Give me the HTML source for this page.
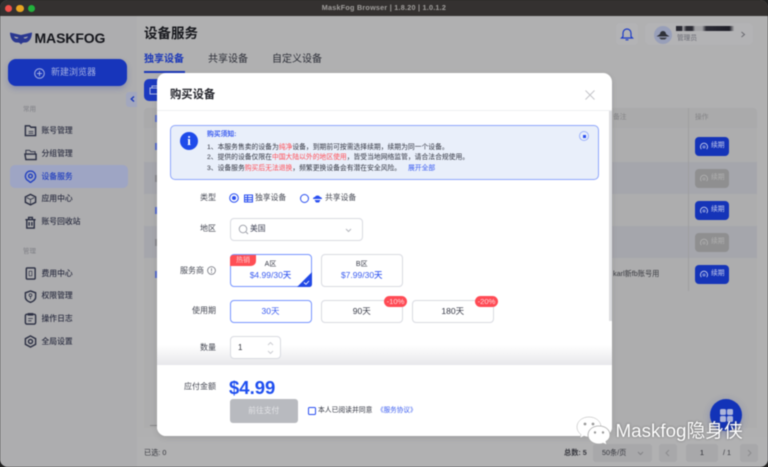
<!DOCTYPE html>
<html lang="zh">
<head>
<meta charset="utf-8">
<style>
html,body{margin:0;padding:0;width:768px;height:467px;overflow:hidden;background:#222}
*{box-sizing:border-box}
body{font-family:"Liberation Sans","Noto Sans CJK SC",sans-serif}
#win{position:absolute;left:0;top:0;width:768px;height:467px;border-radius:8px;overflow:hidden;background:#b0b0b1;filter:blur(.45px)}
.a{position:absolute;white-space:nowrap}
.nav{left:41.500px;font-size:7.800px;line-height:12px;color:#2c2f42;font-weight:500}
.grp{left:23px;font-size:6.500px;line-height:10px;color:#7d7e84}
.ic{position:absolute;left:23.500px;width:13px;height:13px;fill:none;stroke:#2a2e42;stroke-width:1.500}
.lbl{right:552px;font-size:8px;line-height:12px;color:#444752;text-align:right}
.card{position:absolute;background:#fff;border:1px solid #d9dbe1;border-radius:4px;text-align:center}
.sel{border-color:#7795ff}
.badge{position:absolute;background:#ff4b55;color:#ffd9dc;font-size:7.600px;line-height:11px;height:11px;border-radius:6px;text-align:center}
.n{font-size:6.800px;line-height:10px;color:#30333f}
.r{color:#ff4d55}
.ren{position:absolute;left:695px;width:34px;height:18.500px;border-radius:4px;color:#c6cdee;font-size:6.800px;line-height:18px;padding-left:16px;background:#1534b8}
.ren svg{position:absolute;left:5px;top:5px;width:8px;height:8px;fill:none;stroke:#c6cdee;stroke-width:1}
.off{background:#8f8f90;color:#b0b0b0}
.off svg{stroke:#b0b0b0}
</style>
</head>
<body>
<div id="win">
<!-- title bar -->
<div class="a" style="left:0;top:0;width:768px;height:16px;background:#343130"></div>
<div class="a" style="left:4.500px;top:4.500px;width:7.500px;height:7.500px;border-radius:50%;background:#f0504a"></div>
<div class="a" style="left:16px;top:4.500px;width:7.500px;height:7.500px;border-radius:50%;background:#e9a522"></div>
<div class="a" style="left:27.500px;top:4.500px;width:7.500px;height:7.500px;border-radius:50%;background:#22b23c"></div>
<div class="a" style="left:0;width:768px;top:2.500px;text-align:center;font-size:7.200px;line-height:9px;color:#a09e9c;font-weight:bold;letter-spacing:.25px">MaskFog Browser | 1.8.20 | 1.0.1.2</div>

<!-- sidebar -->
<div class="a" style="left:0;top:16px;width:137px;height:451px;background:#adadaf"></div>
<svg class="a" style="left:10px;top:31px;width:22px;height:14px" viewBox="0 0 22 14"><path d="M0 1.500C4 2.500 7 3 11 4C15 3 18 2.500 22 1.500C22 7 19 12 14.500 11.500C13 11.300 12 12 11 13.500C10 12 9 11.300 7.500 11.500C3 12 0 7 0 1.500Z" fill="#2a3790"/><path d="M4 5.500L8.500 6.500C8 8 5 8 4 5.500ZM18 5.500L13.500 6.500C14 8 17 8 18 5.500Z" fill="#adadaf"/></svg>
<div class="a" style="left:34.500px;top:29px;font-size:14px;line-height:18px;font-weight:bold;color:#15161c;letter-spacing:-.1px">MASKFOG</div>
<div class="a" style="left:8px;top:59px;width:119px;height:27px;border-radius:8px;background:#1735bb;box-shadow:0 3px 6px rgba(40,60,170,.25)"></div>
<svg class="a" style="left:34px;top:67.500px;width:11px;height:11px" viewBox="0 0 11 11" fill="none" stroke="#a2aee2" stroke-width="1"><circle cx="5.500" cy="5.500" r="4.800"/><path d="M5.500 3V8M3 5.500H8"/></svg>
<div class="a" style="left:51px;top:66px;font-size:9px;line-height:13px;color:#a2aee2">新建浏览器</div>
<div class="a" style="left:126px;top:92px;width:11px;height:15px;background:#a2a7be;border-radius:3px 0 0 3px"></div>
<svg class="a" style="left:129.500px;top:96px;width:5px;height:6px" viewBox="0 0 5 6"><path d="M4 .5L1.200 3L4 5.500" fill="none" stroke="#1735bb" stroke-width="1.300"/></svg>

<div class="a grp" style="top:104.500px">常用</div>
<div class="a" style="left:9.500px;top:165px;width:118.500px;height:22.500px;border-radius:5px;background:#9ea5c4"></div>

<svg class="ic" style="top:124px" viewBox="0 0 14 14"><path d="M1.500 2H6L7.500 3.500H12.500V12.500H1.500Z"/><path d="M5 8H10M5 10H10" stroke-width=".8"/></svg>
<div class="a nav" style="top:124.500px">账号管理</div>
<svg class="ic" style="top:147.500px" viewBox="0 0 14 14"><path d="M2 6V2.500H6L7.500 4H12V6" stroke-width="1"/><path d="M1 6.500H13V12.500H2Z"/></svg>
<div class="a nav" style="top:148px">分组管理</div>
<svg class="ic" style="top:170px;stroke:#2240c0" viewBox="0 0 14 14"><path d="M7 13.500L4.500 11.500A5.500 5.500 0 1 1 9.500 11.500Z"/><circle cx="7" cy="6.500" r="2"/></svg>
<div class="a nav" style="top:170.500px;color:#1f3dbf">设备服务</div>
<svg class="ic" style="top:192.500px" viewBox="0 0 14 14"><path d="M7 1.500L12.500 4.200V10L7 12.800L1.500 10V4.200Z"/><path d="M3 5L7 7L11 5M7 7V12" stroke-width=".8"/></svg>
<div class="a nav" style="top:193px">应用中心</div>
<svg class="ic" style="top:215.500px" viewBox="0 0 14 14"><path d="M1.500 4H12.500M5 3.500V1.500H9V3.500M3 4V13H11V4M5.500 6.500V10.500M8.500 6.500V10.500"/></svg>
<div class="a nav" style="top:216px">账号回收站</div>

<div class="a grp" style="top:246.500px">管理</div>
<svg class="ic" style="top:267px" viewBox="0 0 14 14"><rect x="2.500" y="1" width="9.500" height="12" rx="1"/><path d="M5.500 4.500H8.500V9.500H5.500Z" stroke-width=".7"/></svg>
<div class="a nav" style="top:267.500px">费用中心</div>
<svg class="ic" style="top:289.500px" viewBox="0 0 14 14"><path d="M7 1L12.500 3V8C12.500 10.500 9.500 12.500 7 13.300C4.500 12.500 1.500 10.500 1.500 8V3Z"/><circle cx="7" cy="5.500" r="1.500" stroke-width=".8"/><path d="M7 7V10" stroke-width=".8"/></svg>
<div class="a nav" style="top:290px">权限管理</div>
<svg class="ic" style="top:312px" viewBox="0 0 14 14"><rect x="1.500" y="2.500" width="11" height="10.500" rx="1.500"/><path d="M4.500 1.500H9.500V3.500H4.500ZM4.500 7H9.500M4.500 9.500H8" stroke-width=".9"/></svg>
<div class="a nav" style="top:312.500px">操作日志</div>
<svg class="ic" style="top:335px" viewBox="0 0 14 14"><path d="M7 1L12.500 4V10L7 13L1.500 10V4Z"/><circle cx="7" cy="7" r="2.200"/></svg>
<div class="a nav" style="top:335.500px">全局设置</div>

<!-- main -->
<div class="a" style="left:144px;top:25px;font-size:13.500px;line-height:18px;font-weight:bold;color:#17181d">设备服务</div>
<div class="a" style="left:144px;top:53px;font-size:10px;line-height:14px;font-weight:bold;color:#1c38b8">独享设备</div>
<div class="a" style="left:144px;top:71px;width:41px;height:1.500px;background:#1c38b8"></div>
<div class="a" style="left:208px;top:53px;font-size:10px;line-height:14px;color:#2d2f38">共享设备</div>
<div class="a" style="left:272px;top:53px;font-size:10px;line-height:14px;color:#2d2f38">自定义设备</div>

<div class="a" style="left:144px;top:78.500px;width:30px;height:22.500px;border-radius:5px;background:#1c3ac0"></div>
<svg class="a" style="left:149px;top:85px;width:9px;height:10px" viewBox="0 0 9 10" fill="none" stroke="#adb8e4"><path d="M1 3H9V9H1ZM3 3V1H9"/></svg>

<!-- table -->
<div class="a" style="left:144px;top:108px;width:613px;height:20px;background:#aaaaab;border-radius:4px 4px 0 0"></div>
<div class="a" style="left:144px;top:128px;width:613px;height:300px;background:#adadae"></div>
<div class="a" style="left:144px;top:162px;width:613px;height:32px;background:#a5a6ac"></div>
<div class="a" style="left:144px;top:226px;width:613px;height:32px;background:#a5a6ac"></div>
<div class="a" style="left:688px;top:108px;width:1px;height:183px;background:#9f9fa0"></div>
<div class="a" style="left:155px;top:115px;width:3px;height:7px;background:#5c71c9"></div>
<div class="a" style="left:155px;top:143px;width:3px;height:7px;background:#546aca"></div>
<div class="a" style="left:155px;top:175px;width:3px;height:7px;background:#89898d"></div>
<div class="a" style="left:155px;top:207px;width:3px;height:7px;background:#546aca"></div>
<div class="a" style="left:155px;top:239px;width:3px;height:7px;background:#89898d"></div>
<div class="a" style="left:155px;top:271px;width:3px;height:7px;background:#546aca"></div>
<div class="a" style="left:150px;top:425px;width:7px;height:1px;background:#89898a"></div>
<div class="a" style="left:613px;top:113px;font-size:6.800px;line-height:10px;color:#848486">备注</div>
<div class="a" style="left:695px;top:113px;font-size:6.800px;line-height:10px;color:#848486">操作</div>
<div class="a" style="left:613px;top:269px;font-size:7.200px;line-height:10px;color:#38393f">karl新fb账号用</div>
<div class="ren" style="top:137px"><svg viewBox="0 0 9 9"><path d="M1.500 8A4 4 0 1 1 7.500 8"/><path d="M3.500 6.500H5.500V4.500H3.500Z" stroke-width=".7"/></svg>续期</div>
<div class="ren off" style="top:169px"><svg viewBox="0 0 9 9"><path d="M1.500 8A4 4 0 1 1 7.500 8"/><path d="M3.500 6.500H5.500V4.500H3.500Z" stroke-width=".7"/></svg>续期</div>
<div class="ren" style="top:201px"><svg viewBox="0 0 9 9"><path d="M1.500 8A4 4 0 1 1 7.500 8"/><path d="M3.500 6.500H5.500V4.500H3.500Z" stroke-width=".7"/></svg>续期</div>
<div class="ren off" style="top:233px"><svg viewBox="0 0 9 9"><path d="M1.500 8A4 4 0 1 1 7.500 8"/><path d="M3.500 6.500H5.500V4.500H3.500Z" stroke-width=".7"/></svg>续期</div>
<div class="ren" style="top:265px"><svg viewBox="0 0 9 9"><path d="M1.500 8A4 4 0 1 1 7.500 8"/><path d="M3.500 6.500H5.500V4.500H3.500Z" stroke-width=".7"/></svg>续期</div>

<!-- top right -->
<div class="a" style="left:615.500px;top:23px;width:22.500px;height:22px;border-radius:4px;background:#b3b3b5"></div>
<svg class="a" style="left:620px;top:28px;width:14px;height:13px" viewBox="0 0 14 13" fill="none" stroke="#1c3bc8" stroke-width="1.200"><path d="M1.500 10H12.500L11 8.500V5A4 4 0 0 0 3 5V8.500Z"/><path d="M5.500 11.800H8.500"/></svg>
<div class="a" style="left:645px;top:23px;width:108px;height:22px;border-radius:5px;background:#b3b3b5"></div>
<div class="a" style="left:654px;top:25.500px;width:18px;height:18px;border-radius:50%;background:#989fb9"></div>
<svg class="a" style="left:656px;top:29.500px;width:14px;height:10px" viewBox="0 0 14 10"><path d="M4 4A3 3 0 0 1 10 4L13.500 6.500H.5Z" fill="#2f3139"/><path d="M3 7.500H11L9 9.500H5Z" fill="#3f4149"/></svg>
<div class="a" style="left:676px;top:25.500px;width:58px;height:5.500px;background:linear-gradient(90deg,#2a2a33 0,#2a2a33 10%,#a8a8ac 12%,#2a2a33 18%,#2a2a33 28%,#a2a2a6 33%,#a2a2a6 45%,#2b2b35 52%,#1e1e28 92%,#a8a8aa 100%)"></div>
<div class="a" style="left:677px;top:34px;font-size:6.700px;line-height:10px;color:#6a6b74">管理员</div>
<svg class="a" style="left:740px;top:31px;width:6px;height:7px" viewBox="0 0 6 7"><path d="M1.500 1L4.500 3.500L1.500 6" fill="none" stroke="#6a6a70" stroke-width="1"/></svg>

<!-- bottom bar -->
<div class="a" style="left:137px;top:437px;width:631px;height:30px;background:#b1b1b2"></div>
<div class="a" style="left:144px;top:448px;font-size:7.200px;line-height:10px;color:#36373e">已选: 0</div>
<div class="a" style="left:564px;top:448px;font-size:7.200px;line-height:10px;color:#36373e;font-weight:bold">总数: 5</div>
<div class="a" style="left:593px;top:443.500px;width:59px;height:18.500px;border-radius:3px;background:#a8a8aa"></div>
<div class="a" style="left:602px;top:448px;font-size:7.200px;line-height:10px;color:#36373e">50条/页</div>
<svg class="a" style="left:637px;top:451px;width:7px;height:5px" viewBox="0 0 7 5"><path d="M1 1L3.500 3.500L6 1" fill="none" stroke="#848487"/></svg>
<div class="a" style="left:658.500px;top:443.500px;width:18.500px;height:18.500px;border-radius:3px;background:#a8a8aa"></div>
<svg class="a" style="left:665px;top:449px;width:5px;height:8px" viewBox="0 0 5 8"><path d="M4 1L1 4L4 7" fill="none" stroke="#8c8c8e"/></svg>
<div class="a" style="left:686px;top:443.500px;width:32px;height:18.500px;border-radius:3px;background:#a8a8aa;text-align:center;font-size:7.500px;line-height:18px;color:#2a2b32">1</div>
<div class="a" style="left:723px;top:448px;font-size:7.200px;line-height:10px;color:#36373e">/ 1</div>
<div class="a" style="left:740px;top:443.500px;width:18px;height:18.500px;border-radius:3px;background:#a8a8aa"></div>
<svg class="a" style="left:747px;top:449px;width:5px;height:8px" viewBox="0 0 5 8"><path d="M1 1L4 4L1 7" fill="none" stroke="#8c8c8e"/></svg>

<!-- modal -->
<div class="a" style="left:157px;top:73px;width:455px;height:363px;background:#fff;border-radius:9px;overflow:hidden;box-shadow:0 2px 6px rgba(60,60,60,.15)">
  <div class="a" style="left:0;top:37px;width:455px;height:1px;background:#eeeff1"></div>
  <div class="a" style="left:452px;top:38px;width:3px;height:210px;background:#dcdde0"></div>
  <div class="a" style="left:0;top:272px;width:455px;height:21px;background:linear-gradient(#fff,#e6e6ea)"></div>
  <div class="a" style="left:0;top:292px;width:455px;height:71px;background:#fff"></div>
</div>
<div class="a" style="left:170px;top:87px;font-size:11.300px;line-height:16px;font-weight:bold;color:#22232a">购买设备</div>
<svg class="a" style="left:585px;top:90px;width:10px;height:10px" viewBox="0 0 10 10"><path d="M.5 .5L9.500 9.500M9.500 .5L.5 9.500" stroke="#c4c5c9" stroke-width="1"/></svg>

<!-- notice -->
<div class="a" style="left:170px;top:124.500px;width:428.500px;height:55px;background:#e9effa;border:1px solid #8fa6fb;border-radius:5px"></div>
<div class="a" style="left:180px;top:132px;width:18px;height:18px;border-radius:50%;background:#1f4bea;color:#fff;font:bold 13px/18px 'Liberation Serif',serif;text-align:center">i</div>
<div class="a" style="left:207px;top:130px;font-size:6.800px;line-height:10px;font-weight:bold;color:#3a5cf0">购买须知:</div>
<div class="a n" style="left:207px;top:143px">1、本服务售卖的设备为<span class="r">纯净</span>设备，到期前可按需选择续期，续期为同一个设备。</div>
<div class="a n" style="left:207px;top:153px">2、提供的设备仅限在<span class="r">中国大陆以外的地区使用</span>，皆受当地网络监管，请合法合规使用。</div>
<div class="a n" style="left:207px;top:164px">3、设备服务<span class="r">购买后无法退换</span>，频繁更换设备会有潜在安全风险。 <span style="color:#3a5cf0;margin-left:5px">展开全部</span></div>
<div class="a" style="left:579px;top:131px;width:10px;height:10px;border-radius:50%;border:1px solid #9db2fb"></div>
<div class="a" style="left:582.500px;top:134.500px;width:3px;height:3px;background:#2a4ff0"></div>

<!-- form -->
<div class="a lbl" style="top:192px">类型</div>
<svg class="a" style="left:229px;top:193px;width:10px;height:10px" viewBox="0 0 10 10"><circle cx="5" cy="5" r="4.300" fill="none" stroke="#2a4ff0"/><circle cx="5" cy="5" r="2" fill="#2a4ff0"/></svg>
<svg class="a" style="left:243.500px;top:193.500px;width:9px;height:9px" viewBox="0 0 9 9"><path d="M.5 1H8.500V8H.5ZM.5 3.500H8.500M.5 5.800H8.500M3.500 1V8" fill="none" stroke="#2a4ff0" stroke-width="1.100"/></svg>
<div class="a" style="left:255px;top:192px;font-size:7.800px;line-height:12px;color:#444752">独享设备</div>
<div class="a" style="left:300px;top:193.500px;width:9px;height:9px;border-radius:50%;border:1.200px solid #2a4ff0"></div>
<svg class="a" style="left:313px;top:193.500px;width:9px;height:9px" viewBox="0 0 9 9"><path d="M0 5C0 3.500 1 3 2 3C2.500 1 6.500 1 7 3C8 3 9 3.500 9 5Z" fill="#2a4ff0"/><path d="M1.500 6H7.500L6 8.500H3Z" fill="#2a4ff0"/></svg>
<div class="a" style="left:325px;top:192px;font-size:7.800px;line-height:12px;color:#444752">共享设备</div>

<div class="a lbl" style="top:223px">地区</div>
<div class="card" style="left:229.500px;top:217.500px;width:133.500px;height:23.500px"></div>
<svg class="a" style="left:238px;top:224px;width:11px;height:11px" viewBox="0 0 11 11" fill="none" stroke="#9a9da6" stroke-width=".9"><circle cx="5" cy="5" r="3.800"/><path d="M8 8L10 10"/></svg>
<div class="a" style="left:250px;top:223px;font-size:7.800px;line-height:12px;color:#3c3f52">美国</div>
<svg class="a" style="left:345px;top:228px;width:7px;height:5px" viewBox="0 0 7 5"><path d="M1 1L3.500 3.500L6 1" fill="none" stroke="#b5b7bd"/></svg>

<div class="a" style="left:180px;top:265px;font-size:8px;line-height:12px;color:#444752">服务商</div>
<svg class="a" style="left:207px;top:266px;width:9px;height:9px" viewBox="0 0 9 9" fill="none" stroke="#6c6e78" stroke-width=".8"><circle cx="4.500" cy="4.500" r="3.900"/><path d="M4.500 2.200V5.200M4.500 6V7"/></svg>
<div class="card sel" style="left:229.500px;top:254px;width:82px;height:32.500px;overflow:hidden"></div>
<div class="a" style="left:230px;top:254.500px;width:26px;height:11px;background:#ff4f55;border-radius:3px 0 5px 0;color:#ffc9cb;font-size:7px;line-height:11px;text-align:center">热销</div>
<div class="a" style="left:230px;top:258.500px;width:81px;text-align:center;font-size:7px;line-height:11px;color:#363946">A区</div>
<div class="a" style="left:230px;top:269.500px;width:81px;text-align:center;font-size:8.500px;line-height:11px;color:#3a5cf0;font-weight:500">$4.99/30天</div>
<svg class="a" style="left:297px;top:272px;width:15px;height:15px" viewBox="0 0 15 15"><path d="M15 0V12Q15 15 12 15H0Z" fill="#2249e6"/><path d="M7 10.500L9 12.300L12 9" fill="none" stroke="#fff" stroke-width=".9"/></svg>
<div class="card" style="left:320.500px;top:254px;width:82.500px;height:32.500px"></div>
<div class="a" style="left:320.500px;top:258.500px;width:82.500px;text-align:center;font-size:7px;line-height:11px;color:#363946">B区</div>
<div class="a" style="left:320.500px;top:269.500px;width:82.500px;text-align:center;font-size:8.500px;line-height:11px;color:#3a5cf0;font-weight:500">$7.99/30天</div>

<div class="a lbl" style="top:305px">使用期</div>
<div class="card sel" style="left:229.500px;top:300px;width:82px;height:22.500px;font-size:8.500px;line-height:21px;color:#3a5cf0">30天</div>
<div class="card" style="left:320.500px;top:300px;width:82.500px;height:22.500px;font-size:8.500px;line-height:21px;color:#363946">90天</div>
<div class="card" style="left:411.500px;top:300px;width:82.500px;height:22.500px;font-size:8.500px;line-height:21px;color:#363946">180天</div>
<div class="badge" style="left:384px;top:296px;width:23px">-10%</div>
<div class="badge" style="left:475px;top:296px;width:23px">-20%</div>

<div class="a lbl" style="top:342px">数量</div>
<div class="card" style="left:229.500px;top:336px;width:51.500px;height:23px"></div>
<div class="a" style="left:238px;top:342px;font-size:8px;line-height:12px;color:#2d2f38">1</div>
<svg class="a" style="left:267px;top:341px;width:7px;height:14px" viewBox="0 0 7 14"><path d="M1 4L3.500 1.500L6 4M1 10L3.500 12.500L6 10" fill="none" stroke="#c9cad0" stroke-width=".9"/></svg>

<!-- footer -->
<div class="a" style="left:184px;top:381px;font-size:8px;line-height:12px;color:#444752">应付金额</div>
<div class="a" style="left:229px;top:375.500px;font-size:18.500px;line-height:23px;font-weight:bold;color:#1f4ff0">$4.99</div>
<div class="a" style="left:229.500px;top:399px;width:68.500px;height:23.500px;border-radius:3px;background:#b8babf;color:#e3e4e7;font-size:7.800px;line-height:23px;text-align:center">前往支付</div>
<div class="a" style="left:307.500px;top:407px;width:8px;height:8px;border:1.200px solid #2a4ff0;border-radius:1.500px"></div>
<div class="a" style="left:318px;top:406px;font-size:6.800px;line-height:10px;color:#30333f">本人已阅读并同意</div>
<div class="a" style="left:377px;top:406px;font-size:6.600px;line-height:10px;color:#3a5cf0">《服务协议》</div>

<!-- FAB -->
<div class="a" style="left:710px;top:399px;width:32px;height:32px;border-radius:50%;background:#1233b8;box-shadow:0 2px 8px rgba(40,60,180,.3)"></div>
<div class="a" style="left:720px;top:409px;width:5.500px;height:5.500px;border-radius:1.500px;background:#adb5da"></div>
<div class="a" style="left:727px;top:409px;width:5.500px;height:5.500px;border-radius:1.500px;background:#adb5da"></div>
<div class="a" style="left:720px;top:416px;width:5.500px;height:5.500px;border-radius:1.500px;background:#adb5da"></div>
<div class="a" style="left:727px;top:416px;width:5.500px;height:5.500px;border-radius:1.500px;background:#adb5da"></div>

<!-- watermark -->
<svg class="a" style="left:576px;top:416px;width:36px;height:30px" viewBox="0 0 36 30"><path d="M13 1C6 1 1 5.500 1 11C1 14 2.500 16.500 5 18.500L4 22L8 20C10 20.700 11 21 13 21C20 21 25 16.500 25 11C25 5.500 20 1 13 1Z" fill="#fff" stroke="#999" stroke-width=".4"/><circle cx="9" cy="8" r="1.400" fill="#9a9a9a"/><circle cx="17" cy="8" r="1.400" fill="#9a9a9a"/><path d="M23 10C16.500 10 12 14 12 19C12 24 16.500 28 23 28C24.500 28 26 27.700 27 27.200L31 29L30 25.500C32.500 24 34 21.600 34 19C34 14 29.500 10 23 10Z" fill="#fff" stroke="#aaa" stroke-width=".8"/><circle cx="19" cy="16.500" r="1.200" fill="#9a9a9a"/><circle cx="27" cy="16.500" r="1.200" fill="#9a9a9a"/></svg>
<div class="a" style="left:615.500px;top:419px;font-size:18.800px;line-height:24px;color:#fff;text-shadow:0 0 2px rgba(70,70,70,.75)">Maskfog隐身侠</div>
</div>
</body>
</html>
